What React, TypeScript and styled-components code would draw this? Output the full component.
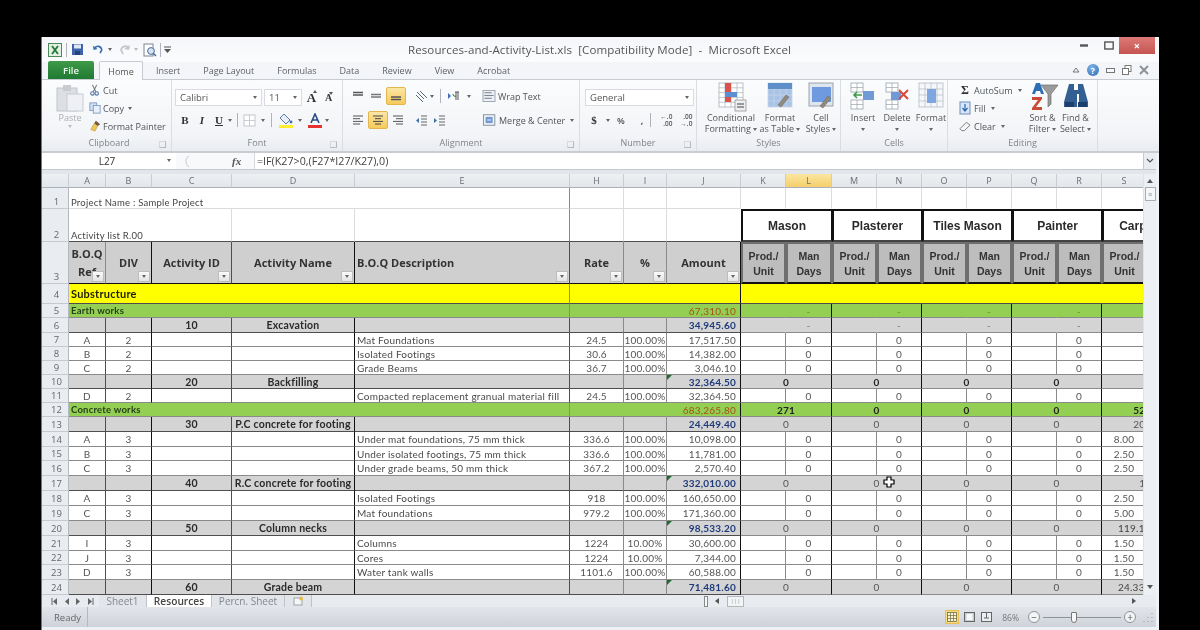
import React from "react";
import styled, { createGlobalStyle } from "styled-components";

const Global = createGlobalStyle`
  html, body { margin: 0; padding: 0; background: #000; height: 630px; overflow: hidden; }
  #root { height: 630px; }
  * { box-sizing: border-box; }
`;

const Page = styled.div`
  width: 1200px; height: 630px; background: #000; padding: 37px 41px 0;
`;
const Win = styled.div`
  width: 1118px; height: 593px; background: #eef1f5; display: flex; flex-direction: column;
  font-family: "Open Sans", "Noto Sans", sans-serif; color: #4a4a4a; filter: blur(0.35px);
  border-left: 1px solid #777; overflow: hidden;
`;
const Svg = styled.svg`display: block; flex-shrink: 0;`;

/* title bar */
const TitleBar = styled.div`
  height: 25px; display: flex; align-items: center; padding-left: 6px; position: relative;
  background: linear-gradient(#f4f6f9, #fbfcfd);
`;
const Quick = styled.div`display: flex; align-items: center; gap: 3px; width: 360px;`;
const Sep = styled.span<{ $h?: number; $m?: number }>`
  display: block; width: 1px; height: ${p => p.$h ?? 14}px; background: #b0b4ba; margin: 0 ${p => p.$m ?? 3}px; flex-shrink: 0;
`;
const Title = styled.div`
  font-size: 11.55px; color: #555; white-space: pre; width: 650px; letter-spacing: .08px;
`;
const WinBtns = styled.div`display: flex; align-items: flex-start; height: 100%; margin-left: auto; margin-right: 4px;`;
const WinBtn = styled.div<{ $w: number; $close?: boolean }>`
  width: ${p => p.$w}px; height: 17px; display: flex; align-items: center; justify-content: center;
  color: #fff; font-size: 11px; font-weight: 700;
  background: ${p => (p.$close ? "linear-gradient(#dd7a78,#c45450)" : "transparent")};
`;

/* tab row */
const TabRow = styled.div`
  height: 18px; display: flex; align-items: flex-end; padding-left: 6px; position: relative;
  border-bottom: 1px solid #c6cbd2; background: #f3f5f8;
`;
const FileTab = styled.div`
  width: 46px; height: 18px; background: linear-gradient(#3f9a48, #1f7a33); color: #eef8ee; font-size: 9.5px;
  font-weight: 600; display: flex; align-items: center; justify-content: center; border-radius: 2px 2px 0 0;
`;
const HomeTab = styled.div`
  margin-left: 5px; width: 44px; height: 19px; margin-bottom: -1px; background: #f9fafb; border: 1px solid #c6cbd2;
  border-bottom: none; font-size: 9px; display: flex; align-items: center; justify-content: center;
  border-radius: 2px 2px 0 0; color: #555;
`;
const TabList = styled.div`display: flex; gap: 23px; margin-left: 13px; height: 18px; align-items: center;`;
const TabLabel = styled.span`font-size: 9px; color: #5d6167;`;
const HelpIcons = styled.div`
  margin-left: auto; margin-right: 10px; display: flex; gap: 7px; align-items: center; height: 18px;
`;
const HelpDot = styled.span`
  width: 12px; height: 12px; border-radius: 50%; background: radial-gradient(circle at 40% 30%, #7fb4ea, #2a69b4);
  color: #fff; font-size: 9px; font-weight: 700; display: flex; align-items: center; justify-content: center;
`;

/* ribbon */
const Ribbon = styled.div`
  height: 73px; display: flex; background: linear-gradient(#fbfcfd, #f2f4f7 80%, #e9ecf0); padding-left: 5px;
  border-bottom: 2px solid #c9ccd1;
`;
const Group = styled.div<{ $w: number }>`
  width: ${p => p.$w}px; display: flex; flex-direction: column; border-right: 1px solid #dadde2; position: relative; flex-shrink: 0;
`;
const GroupBody = styled.div<{ $pl?: number }>`
  flex: 1; display: flex; padding-left: ${p => p.$pl ?? 0}px; padding-top: 1px; min-height: 0;
`;
const GroupLabel = styled.div`
  height: 14px; text-align: center; font-size: 9px; color: #808489; line-height: 12px;
`;
const Launcher = styled.span`
  position: absolute; right: 5px; bottom: 3px; width: 7px; height: 7px; border: 1px solid #b6bbc2; border-top-color: #d5d8dc; border-left-color: #d5d8dc;
`;
const Column = styled.div<{ $gap?: number; $w?: number; $pt?: number }>`
  display: flex; flex-direction: column; gap: ${p => p.$gap ?? 0}px; width: ${p => (p.$w ? p.$w + "px" : "auto")};
  padding-top: ${p => p.$pt ?? 0}px; flex-shrink: 0;
`;
const Line = styled.div<{ $gap?: number; $h?: number; $pl?: number }>`
  display: flex; align-items: center; gap: ${p => p.$gap ?? 2}px; height: ${p => p.$h ?? 18}px;
  padding-left: ${p => p.$pl ?? 0}px; font-size: 9px; color: #505458; white-space: nowrap;
`;
const Faded = styled.div`
  font-size: 9px; color: #a9adb2; text-align: center; margin-top: 1px; line-height: 10px;
`;
const PasteCaret = styled.div`display: flex; justify-content: center; margin-top: 2px; opacity: .4;`;
const Caret = styled.span`
  display: inline-block; width: 0; height: 0; border-left: 2.5px solid transparent; border-right: 2.5px solid transparent;
  border-top: 3px solid #666; flex-shrink: 0; vertical-align: middle;
`;
const SelectBox = styled.div<{ $w: number }>`
  width: ${p => p.$w}px; height: 17px; background: #fff; border: 1px solid #d8dbe0; display: flex; align-items: center;
  justify-content: space-between; padding: 0 4px; font-size: 9.5px; color: #555;
`;
const Toggle = styled.span<{ $on?: boolean }>`
  width: ${p => (p.$on ? 20 : 16)}px; height: 18px; display: flex; align-items: center; justify-content: center; flex-shrink: 0;
  background: ${p => (p.$on ? "linear-gradient(#fbe7a4,#f7c95c)" : "transparent")};
  border: ${p => (p.$on ? "1px solid #e2b64a" : "none")}; border-radius: 2px;
`;
const Glyph = styled.span<{ $i?: boolean; $u?: boolean; $w?: number }>`
  font-family: "Liberation Serif", serif; font-size: 11px; font-weight: 700; color: #333; width: ${p => p.$w ?? 16}px; text-align: center;
  font-style: ${p => (p.$i ? "italic" : "normal")}; text-decoration: ${p => (p.$u ? "underline" : "none")};
`;
const GrowMark = styled.span`
  display: inline-block; margin-left: -3px; vertical-align: top; font-size: 0; width: 0; height: 0;
  border-left: 2px solid transparent; border-right: 2px solid transparent; border-bottom: 3px solid #555;
`;
const ShrinkMark = styled(GrowMark)`border-bottom: none; border-top: 3px solid #555;`;
const BigBtn = styled.div<{ $w: number }>`
  width: ${p => p.$w}px; display: flex; flex-direction: column; align-items: center; flex-shrink: 0;
  font-size: 9px; line-height: 11px; color: #555; text-align: center; white-space: pre;
`;
const BigIcon = styled.div`height: 28px; margin-top: 2px; display: flex; align-items: center; justify-content: center; margin-bottom: 1px;`;

/* formula bar */
const FormulaBar = styled.div`
  height: 17px; display: flex; align-items: center; background: #fff; border-bottom: 1px solid #c6cad0; padding-left: 6px; margin-right: 3px;
  font-size: 9.5px; color: #444;
`;
const NameBox = styled.div`
  width: 128px; display: flex; justify-content: center; position: relative; font-size: 10px; color: #333; padding-right: 10px;
`;
const NameCaret = styled(Caret)`position: absolute; right: 5px; top: 5px;`;
const FxZone = styled.div`
  width: 79px; display: flex; align-items: center; background: #f8f9fb; height: 16px; padding-left: 6px; gap: 42px; border-right: 1px solid #d5d8dc;
`;
const Fx = styled.span`font-family: "Liberation Serif", serif; font-style: italic; font-weight: 700; font-size: 11px; color: #555;`;
const Formula = styled.span`flex: 1; padding-left: 2px; font-size: 10.7px;`;
const ExpandBox = styled.div`
  width: 13px; height: 16px; background: #e9ecf0; display: flex; align-items: center; justify-content: center; border-left: 1px solid #c6cad0;
`;
const Gap = styled.div`height: 4px; background: #e2e5e9; margin-right: 3px;`;

/* sheet */
const cols = "27px 37px 46px 80px 123px 215px 54px 43px 74px 45px 46px 45px 45px 45px 45px 45px 45px 45px 45px";
const SheetWrap = styled.div`display: flex; height: 421px; padding-right: 3px;`;
const GridClip = styled.div`flex: 1; overflow: hidden; min-width: 0; background: #fff;`;
const ScrollBar = styled.div`
  width: 13px; background: #eceff3; display: flex; flex-direction: column; align-items: center; justify-content: space-between; padding: 5px 0 6px;
  border-left: 1px solid #dfe2e6;
`;
const Thumb = styled.div`
  width: 11px; height: 14px; border: 1px solid #a8adb5; background: #f5f7f9; margin-top: 4px; display: flex; align-items: center; justify-content: center;
  font-size: 7px; color: #888; line-height: 1;
`;
const ScrollTop = styled.div`display: flex; flex-direction: column; align-items: center;`;
const ArrowUp = styled.span`
  width: 0; height: 0; border-left: 3.5px solid transparent; border-right: 3.5px solid transparent; border-bottom: 4px solid #555;
`;
const ArrowDown = styled.span`
  width: 0; height: 0; border-left: 3.5px solid transparent; border-right: 3.5px solid transparent; border-top: 4px solid #555;
`;
const Row = styled.div<{ $h: number }>`
  display: grid; grid-template-columns: ${cols}; height: ${p => p.$h}px; width: 1120px;
`;
const Head = styled.div<{ $sel?: boolean }>`
  background: ${p => (p.$sel ? "linear-gradient(#fbe6a0,#f4cf6c)" : "linear-gradient(#eef0f3,#e3e6ea)")};
  border-right: 1px solid #c9ccd2; border-bottom: 1px solid #aab0b7; font-size: 9px; color: #6a6e74; text-align: center; line-height: 13px;
`;
const RowNum = styled.div<{ $pb?: number }>`
  background: #e9ecf0; border-right: 1px solid #b4b8be; border-bottom: 1px solid #c6c9ce; font-size: 9.5px; color: #666;
  display: flex; align-items: flex-end; justify-content: center; line-height: 13px; padding-left: 3px; padding-bottom: ${p => p.$pb ?? 0}px;
`;
const bg: Record<string, string> = { white: "#fff", gray: "#d4d4d4", green: "#92cf52", yellow: "#ffff00", head: "#cfcfcf", trade: "#bcbcbc" };
const edge: Record<string, string> = { black: "1px solid #111", dark: "1px solid #4e4e4e", mid: "1px solid #8a8a8a", light: "1px solid #dcdcdc", none: "1px solid transparent" };
const Cell = styled.div<{ $bg?: string; $r?: string; $b?: string; $span?: number; $al?: string; $bold?: boolean; $color?: string; $size?: number; $pl?: number; $tri?: boolean; $rw?: number }>`
  position: relative; white-space: nowrap;
  grid-column: span ${p => p.$span ?? 1};
  background: ${p => bg[p.$bg ?? "white"]};
  border-right: ${p => edge[p.$r ?? "light"]}; border-bottom: ${p => edge[p.$b ?? "mid"]};
  display: flex; align-items: center; padding: 0 ${p => p.$rw ?? 2}px 0 ${p => p.$pl ?? 2}px;
  justify-content: ${p => (p.$al === "c" ? "center" : p.$al === "r" ? "flex-end" : "flex-start")};
  font-family: "Lato", "Open Sans", sans-serif; font-size: ${p => p.$size ?? 10}px; font-weight: ${p => (p.$bold ? 700 : 400)};
  color: ${p => p.$color ?? "#4a4a4a"}; letter-spacing: .22px;
  &::before {
    content: ""; display: ${p => (p.$tri ? "block" : "none")}; position: absolute; left: 0; top: 0;
    border-top: 5px solid #1f6b32; border-right: 5px solid transparent;
  }
`;
const Bottomed = styled.span<{ $pb: number }>`align-self: flex-end; padding-bottom: ${p => p.$pb}px; font-size: 9.5px; color: #444;`;
const HeaderText = styled.span`
  font-family: "Open Sans", sans-serif; font-size: 11px; font-weight: 700; color: #333; white-space: pre; text-align: center; line-height: 18px; letter-spacing: 0;
`;
const Filter = styled.span`
  position: absolute; right: 1px; bottom: 1px; width: 12px; height: 11px; background: linear-gradient(#fafafa,#e4e4e4); border: 1px solid #bdbdbd;
  display: flex; align-items: center; justify-content: center;
`;
const TradeName = styled.div`
  grid-column: span 2; background: #fff; border: 2px solid #111; border-bottom: 2px solid #444;
  display: flex; align-items: center; justify-content: center; font-family: "Liberation Sans", sans-serif; font-size: 12px; font-weight: 700;
  color: #2a2a2a; margin-right: -1px; white-space: nowrap;
`;
const TradeSub = styled.div`
  background: #bdbdbd; border: 2px solid #6f6f6f; border-bottom: 2px solid #111; display: flex; align-items: center; justify-content: center;
  font-family: "Liberation Sans", sans-serif; font-size: 10.5px; font-weight: 700; line-height: 15px; color: #333; text-align: center; white-space: pre; padding-top: 1px;
`;
const CursorMark = styled.svg`position: absolute; left: 51px; top: 0px; z-index: 2;`;

/* tabs strip */
const Strip = styled.div`
  height: 12px; display: flex; align-items: center; background: #e8ebef; font-size: 10px; color: #777; margin-right: 3px; position: relative;
`;
const NavArrows = styled.div`width: 57px; padding: 0 5px 0 9px; display: flex; justify-content: space-between; align-items: center; flex-shrink: 0;`;
const SheetTab = styled.div<{ $w: number; $on?: boolean }>`
  width: ${p => p.$w}px; height: 12px; display: flex; align-items: center; justify-content: center; flex-shrink: 0; margin-top: -1px; line-height: 12px; padding-top: 1px;
  background: ${p => (p.$on ? "#fff" : "#e2e5ea")}; color: ${p => (p.$on ? "#444" : "#85898f")}; font-weight: ${p => (p.$on ? 600 : 400)};
  border-right: 1px solid #bfc3c9; font-size: ${p => (p.$on ? 10.2 : 10)}px;
`;
const Splitter = styled.div`
  margin-left: 392px; width: 4px; height: 11px; border: 1px solid #888; background: #f7f7f7; flex-shrink: 0;
`;
const Tri = styled.span<{ $dir: "l" | "r" }>`
  width: 0; height: 0; margin-left: ${p => (p.$dir === "l" ? 7 : 388)}px; border-top: 3.5px solid transparent; border-bottom: 3.5px solid transparent;
  ${p => (p.$dir === "l" ? "border-right: 4px solid #555;" : "border-left: 4px solid #555;")}
`;
const HThumb = styled.div`
  margin-left: 8px; width: 17px; height: 11px; border: 1px solid #b2b7be; background: #f2f4f6; font-size: 6px; text-align: center; line-height: 9px; color: #999; flex-shrink: 0;
`;

/* status */
const Status = styled.div`
  height: 20px; display: flex; align-items: center; background: linear-gradient(#e2e5ea,#cfd3d9); font-size: 9.5px; color: #666; margin-right: 3px;
`;
const Ready = styled.div`width: 46px; padding-left: 12px; border-right: 1px solid #b6bac0; height: 100%; display: flex; align-items: center; flex-shrink: 0;`;
const StatusRight = styled.div`margin-left: auto; display: flex; align-items: center; gap: 3px; padding-right: 2px;`;
const ViewBtn = styled.span<{ $on?: boolean }>`
  width: 14px; height: 14px; display: flex; align-items: center; justify-content: center;
  background: ${p => (p.$on ? "#f8dc85" : "transparent")}; border: ${p => (p.$on ? "1px solid #e7c04f" : "none")};
`;
const Zoom = styled.span`margin: 0 6px 0 6px; font-size: 8.5px; color: #777;`;
const Circle = styled.span`
  width: 12px; height: 12px; border-radius: 50%; border: 1px solid #8d939a; background: #f3f5f7; display: flex; align-items: center; justify-content: center;
  font-size: 10px; line-height: 1; color: #555;
`;
const Slider = styled.div`width: 78px; height: 1px; background: #8d939a; position: relative;`;
const SliderThumb = styled.span`
  position: absolute; left: 28px; top: -5px; width: 6px; height: 11px; background: #f6f7f8; border: 1px solid #777; border-radius: 1px 1px 3px 3px;
`;
const DecimalIcon = styled.span`
  display: flex; flex-direction: column; width: 14px; font-size: 6.5px; line-height: 7px; color: #555; font-weight: 600; text-align: right; flex-shrink: 0;
`;

/* icons */
const Grid = ({ x, y, w, h, n = 3, m = 3, c = "#9aa3ad", fill = "#fff" }: any) => {
  const l: any[] = [];
  for (let i = 1; i < n; i++) l.push(<line key={"v" + i} x1={x + (w * i) / n} x2={x + (w * i) / n} y1={y} y2={y + h} stroke={c} strokeWidth=".7" />);
  for (let i = 1; i < m; i++) l.push(<line key={"h" + i} y1={y + (h * i) / m} y2={y + (h * i) / m} x1={x} x2={x + w} stroke={c} strokeWidth=".7" />);
  return <g><rect x={x} y={y} width={w} height={h} fill={fill} stroke={c} strokeWidth=".8" />{l}</g>;
};
const Brush = ({ x, y }: any) => <path d={`M${x} ${y + 12}l8-10 3 2-8 10z`} fill="#8f8a7a" stroke="#666" strokeWidth=".5" />;
const BigCond = () => (
  <Svg width="32" height="30" viewBox="0 0 32 30"><Grid x={4} y={1} w={24} h={24} n={4} m={5} c="#a9b1ba" />
    <rect x={10} y={1} width={6} height={10} fill="#d9534a" /><rect x={10} y={10} width={12} height={5} fill="#5b8fd4" /><rect x={10} y={15} width={6} height={5} fill="#d9534a" />
    <rect x={20} y={18} width={11} height={11} fill="#eee" stroke="#888" strokeWidth=".7" /><path d="M22 22h7M22 25h7" stroke="#444" strokeWidth="1" /></Svg>
);
const BigTable = () => (
  <Svg width="30" height="30" viewBox="0 0 30 30"><Grid x={3} y={1} w={24} h={24} n={4} m={4} c="#c7d5e8" fill="#a9c3e6" /><rect x={3} y={1} width={24} height={6} fill="#5f8fc9" /><Brush x={13} y={11} /></Svg>
);
const BigCell = () => (
  <Svg width="30" height="30" viewBox="0 0 30 30"><rect x={3} y={1} width={24} height={23} fill="#dfe6f0" stroke="#9aa3ad" /><rect x={6} y={5} width={19} height={15} fill="#6f9ae0" /><Brush x={14} y={12} /></Svg>
);
const BigInsert = () => (
  <Svg width="30" height="30" viewBox="0 0 30 30"><Grid x={3} y={1} w={12} h={9} n={2} m={2} /><Grid x={3} y={18} w={12} h={9} n={2} m={2} /><rect x={15} y={9} width={11} height={9} fill="#6f9ad6" /><path d="M14 13H6M9 10l-3 3 3 3" stroke="#3f9a48" strokeWidth="1.6" fill="none" /></Svg>
);
const BigDelete = () => (
  <Svg width="30" height="30" viewBox="0 0 30 30"><Grid x={4} y={1} w={12} h={9} n={2} m={2} /><Grid x={4} y={18} w={12} h={9} n={2} m={2} /><rect x={9} y={10} width={10} height={8} fill="#6f9ad6" /><path d="M17 8l9 9M26 8l-9 9" stroke="#d94a38" strokeWidth="2" /></Svg>
);
const BigFormat = () => (
  <Svg width="30" height="30" viewBox="0 0 30 30"><Grid x={3} y={1} w={24} h={24} n={4} m={4} c="#b5bcc5" fill="#f5f7fa" /><rect x={11} y={7} width={9} height={14} fill="#7ea6e0" /></Svg>
);
const BigSort = () => (
  <Svg width="32" height="30" viewBox="0 0 32 30"><path d="M9 1h4l4 11h-3l-1-3H9l-1 3H5z" fill="#2d6fb5" /><path d="M5 15h10v2l-6 8h6v3H5v-2l6-8H5z" fill="#c94a35" /><path d="M14 3h17l-7 9v10l-3 3V12z" fill="#9b9b9b" stroke="#6f6f6f" strokeWidth=".7" /></Svg>
);
const BigFind = () => (
  <Svg width="30" height="30" viewBox="0 0 30 30"><path d="M8 2h5v6h4V2h5l5 18v5h-9V12h-2v13H3v-5z" fill="#345f93" /><rect x={4} y={20} width={9} height={5} fill="#1c3f6c" /><rect x={17} y={20} width={9} height={5} fill="#1c3f6c" /></Svg>
);

const FilterBtn = () => <Filter><Caret /></Filter>;

const trades = ["Mason", "Plasterer", "Tiles Mason", "Painter", "Carpenter"];
const letters = ["A", "B", "C", "D", "E", "H", "I", "J", "K", "L", "M", "N", "O", "P", "Q", "R", "S", ""];
const BLUE = "#1e3a7a", ORG = "#a6501c";

type R = {
  n: number; h: number; k: "white" | "gray" | "green"; a?: string; b?: string; c?: string; d?: string; e?: string;
  rate?: string; pct?: string; amt?: string; tri?: boolean; t?: string; dash?: boolean; s?: string; sl?: boolean;
};
const data: R[] = [
  { n: 5, h: 14, k: "green", a: "Earth works", amt: "67,310.10", dash: true },
  { n: 6, h: 15, k: "gray", c: "10", d: "Excavation", amt: "34,945.60", dash: true },
  { n: 7, h: 14, k: "white", a: "A", b: "2", e: "Mat Foundations", rate: "24.5", pct: "100.00%", amt: "17,517.50", t: "0" },
  { n: 8, h: 14, k: "white", a: "B", b: "2", e: "Isolated Footings", rate: "30.6", pct: "100.00%", amt: "14,382.00", t: "0" },
  { n: 9, h: 14, k: "white", a: "C", b: "2", e: "Grade Beams", rate: "36.7", pct: "100.00%", amt: "3,046.10", t: "0" },
  { n: 10, h: 14, k: "gray", c: "20", d: "Backfilling", amt: "32,364.50", tri: true, t: "0" },
  { n: 11, h: 14, k: "white", a: "D", b: "2", e: "Compacted replacement granual material fill", rate: "24.5", pct: "100.00%", amt: "32,364.50", t: "0" },
  { n: 12, h: 14, k: "green", a: "Concrete works", amt: "683,265.80", t: "0", s: "52.50" },
  { n: 13, h: 15, k: "gray", c: "30", d: "P.C concrete for footing", amt: "24,449.40", t: "0", s: "20.40" },
  { n: 14, h: 15, k: "white", a: "A", b: "3", e: "Under mat foundations, 75 mm thick", rate: "336.6", pct: "100.00%", amt: "10,098.00", t: "0", s: "8.00" },
  { n: 15, h: 14, k: "white", a: "B", b: "3", e: "Under isolated footings, 75 mm thick", rate: "336.6", pct: "100.00%", amt: "11,781.00", t: "0", s: "2.50" },
  { n: 16, h: 15, k: "white", a: "C", b: "3", e: "Under grade beams, 50 mm thick", rate: "367.2", pct: "100.00%", amt: "2,570.40", t: "0", s: "2.50" },
  { n: 17, h: 15, k: "gray", c: "40", d: "R.C concrete for footing", amt: "332,010.00", tri: true, t: "0", s: "1.5" },
  { n: 18, h: 15, k: "white", a: "A", b: "3", e: "Isolated Footings", rate: "918", pct: "100.00%", amt: "160,650.00", t: "0", s: "2.50" },
  { n: 19, h: 15, k: "white", a: "C", b: "3", e: "Mat foundations", rate: "979.2", pct: "100.00%", amt: "171,360.00", t: "0", s: "5.00" },
  { n: 20, h: 15, k: "gray", c: "50", d: "Column necks", amt: "98,533.20", tri: true, t: "0", s: "119.16", sl: true },
  { n: 21, h: 15, k: "white", a: "I", b: "3", e: "Columns", rate: "1224", pct: "10.00%", amt: "30,600.00", t: "0", s: "1.50" },
  { n: 22, h: 14, k: "white", a: "J", b: "3", e: "Cores", rate: "1224", pct: "10.00%", amt: "7,344.00", t: "0", s: "1.50" },
  { n: 23, h: 15, k: "white", a: "D", b: "3", e: "Water tank walls", rate: "1101.6", pct: "100.00%", amt: "60,588.00", t: "0", s: "1.50" },
  { n: 24, h: 15, k: "gray", c: "60", d: "Grade beam", amt: "71,481.60", tri: true, t: "0", s: "24.33", sl: true },
];

const TradeCells = ({ r }: { r: R }) => {
  const green = r.k === "green";
  const out: React.ReactNode[] = [];
  for (let i = 0; i < 4; i++) {
    if (r.k === "white") {
      out.push(<Cell key={i + "k"} $r="mid" />);
      out.push(<Cell key={i + "l"} $r="black" $al="c" $color="#555">{r.t}</Cell>);
    } else if (r.dash) {
      out.push(<Cell key={i + "k"} $bg={r.k} $r="none" />);
      out.push(<Cell key={i + "l"} $bg={r.k} $r="black" $al="c" $color={green ? "#5d9a2e" : "#777"}>-</Cell>);
    } else {
      const val = r.n === 12 && i === 0 ? "271" : "0";
      const bold = r.n === 12 || r.n === 10;
      out.push(
        <Cell key={i} $bg={r.k} $span={2} $r="black" $al="c" $bold={bold} $color={bold ? "#222" : "#555"}>
          {val}
          {r.n === 17 && i === 1 && (
            <CursorMark width="12" height="13" viewBox="0 0 12 13">
              <path d="M4 1h4v3h3v4H8v3H4V8H1V4h3z" fill="#fff" stroke="#000" strokeWidth="1.2" />
            </CursorMark>
          )}
        </Cell>
      );
    }
  }
  if (r.k === "white") {
    out.push(<Cell key="s" $al="c" $r="mid" $color="#555">{r.s}</Cell>);
    out.push(<Cell key="t" />);
  } else if (r.sl) {
    out.push(<Cell key="s" $bg={r.k} $span={2} $pl={16} $color="#444">{r.s}</Cell>);
  } else {
    out.push(<Cell key="s" $bg={r.k} $span={2} $al="c" $bold={green} $color={green ? "#222" : "#555"}>{r.s}</Cell>);
  }
  return <>{out}</>;
};

const DataRow = ({ r }: { r: R }) => {
  const line = r.k === "white" ? "mid" : "dark";
  if (r.k === "green") {
    return (
      <Row $h={r.h}>
        <RowNum>{r.n}</RowNum>
        <Cell $bg="green" $span={5} $r="mid" $b="mid" $bold $size={9.5} $color="#25401a">{r.a}</Cell>
        <Cell $bg="green" $span={2} $r="none" />
        <Cell $bg="green" $r="black" $al="r" $color={ORG} $rw={4}>{r.amt}</Cell>
        <TradeCells r={r} />
      </Row>
    );
  }
  const gray = r.k === "gray";
  return (
    <Row $h={r.h}>
      <RowNum>{r.n}</RowNum>
      <Cell $bg={r.k} $r="dark" $al="c" $b={line} $color="#555">{r.a}</Cell>
      <Cell $bg={r.k} $r="black" $al="c" $b={line} $color="#555">{r.b}</Cell>
      <Cell $bg={r.k} $r="dark" $al="c" $b={line} $bold $size={10.5} $color="#2a2a2a">{r.c}</Cell>
      <Cell $bg={r.k} $r="black" $al="c" $b={line} $bold $size={10.5} $color="#2a2a2a">{r.d}</Cell>
      <Cell $bg={r.k} $r="dark" $b={line}>{r.e}</Cell>
      <Cell $bg={r.k} $r="mid" $al="c" $b={line} $color="#555">{r.rate}</Cell>
      <Cell $bg={r.k} $r="mid" $al="c" $b={line} $pl={0} $rw={0} $color="#555">{r.pct}</Cell>
      <Cell $bg={r.k} $r="black" $al="r" $b={line} $rw={4} $tri={r.tri} $bold={gray} $color={gray ? BLUE : "#555"}>{r.amt}</Cell>
      <TradeCells r={r} />
    </Row>
  );
};

const CellDown = ({ label }: { label: string }) => <>{label + "\n"}<Caret /></>;
const TextCaret = ({ label }: { label: string }) => <>{label + " "}<Caret /></>;

export default function App() {
  return (
    <Page>
      <Global />
      <Win>
        <TitleBar>
          <Quick>
            <Svg width="14" height="14" viewBox="0 0 14 14"><rect x=".5" y=".5" width="13" height="13" fill="#e3efe4" stroke="#4c8a55" /><path d="M4 3l6 8M10 3l-6 8" stroke="#1f7a33" strokeWidth="1.8" /></Svg>
            <Sep $m={1} />
            <Svg width="13" height="13" viewBox="0 0 13 13"><rect x="1" y="1" width="11" height="11" fill="#3f63a8" /><rect x="3" y="1.5" width="7" height="4" fill="#dfe7f5" /><rect x="4" y="8" width="5" height="4" fill="#23427e" /></Svg>
            <Svg width="13" height="13" viewBox="0 0 16 13" style={{ marginLeft: 5 }}><path d="M3 5c3-4 8-3 9 2l-2 4" fill="none" stroke="#3a6fb5" strokeWidth="2" /><path d="M1 2l1 5 5-1z" fill="#3a6fb5" /></Svg>
            <Caret />
            <Svg width="14" height="13" viewBox="0 0 14 13" style={{ marginLeft: 2 }}><path d="M12 5C9 2 5 3 4 7l2 4" fill="none" stroke="#c4c8ce" strokeWidth="1.8" /><path d="M13 2l-1 5-5-1z" fill="#c4c8ce" /></Svg>
            <Caret style={{ borderTopColor: "#bbb" }} />
            <Svg width="15" height="14" viewBox="0 0 15 14" style={{ marginLeft: 1 }}><rect x="2" y="1" width="9" height="12" fill="#fff" stroke="#7d8590" /><circle cx="9" cy="8" r="3.4" fill="#d5e3f3" stroke="#4a6c96" /><path d="M11 10l3 3" stroke="#4a6c96" strokeWidth="1.5" /></Svg>
            <Sep $m={0} />
            <Svg width="7" height="8" viewBox="0 0 7 8"><path d="M0 1h7" stroke="#555" /><path d="M0 3l3.5 4L7 3z" fill="#555" /></Svg>
          </Quick>
          <Title>{"Resources-and-Activity-List.xls  [Compatibility Mode]  -  Microsoft Excel"}</Title>
          <WinBtns>
            <WinBtn $w={30}><Svg width="8" height="3" viewBox="0 0 8 3"><rect width="8" height="2.4" fill="#555" y=".3" /></Svg></WinBtn>
            <WinBtn $w={20}><Svg width="10" height="9" viewBox="0 0 10 9"><rect x=".8" y="1" width="8.4" height="7" fill="none" stroke="#555" strokeWidth="1.4" /></Svg></WinBtn>
            <WinBtn $w={36} $close>×</WinBtn>
          </WinBtns>
        </TitleBar>

        <TabRow>
          <FileTab>File</FileTab>
          <HomeTab>Home</HomeTab>
          <TabList>
            {["Insert", "Page Layout", "Formulas", "Data", "Review", "View", "Acrobat"].map(t => <TabLabel key={t}>{t}</TabLabel>)}
          </TabList>
          <HelpIcons>
            <Svg width="8" height="6" viewBox="0 0 8 6"><path d="M1 5l3-4 3 4z" fill="none" stroke="#777" /></Svg>
            <HelpDot>?</HelpDot>
            <Svg width="9" height="5" viewBox="0 0 9 5"><rect x=".5" y=".5" width="8" height="4" fill="#f7f8f9" stroke="#777" /></Svg>
            <Svg width="10" height="10" viewBox="0 0 10 10"><rect x="3" y=".5" width="6" height="6" fill="#fff" stroke="#777" /><rect x=".5" y="3.5" width="6" height="6" fill="#fff" stroke="#777" /></Svg>
            <Svg width="10" height="10" viewBox="0 0 10 10"><path d="M1 1l8 8M9 1L1 9" stroke="#8a8f95" strokeWidth="1.8" /></Svg>
          </HelpIcons>
        </TabRow>

        <Ribbon>
          <Group $w={125}>
            <GroupBody $pl={4}>
              <Column $w={38}>
                <Svg width="30" height="28" viewBox="0 0 30 28" style={{ margin: "3px 0 0 4px" }}>
                  <rect x="2" y="4" width="20" height="23" fill="#dcdfe3" stroke="#c1c5ca" /><rect x="8" y="1" width="8" height="6" fill="#c8ccd1" /><rect x="12" y="10" width="16" height="17" fill="#eef0f3" stroke="#c8ccd1" />
                </Svg>
                <Faded>Paste</Faded>
                <PasteCaret><Caret /></PasteCaret>
              </Column>
              <Column>
                <Line>
                  <Svg width="12" height="12" viewBox="0 0 14 14"><path d="M4 1l4 8M9 1L5 9" stroke="#6e7680" strokeWidth="1.2" /><circle cx="4" cy="11" r="2" fill="none" stroke="#5476a6" strokeWidth="1.3" /><circle cx="9" cy="11" r="2" fill="none" stroke="#5476a6" strokeWidth="1.3" /></Svg>
                  Cut
                </Line>
                <Line>
                  <Svg width="12" height="12" viewBox="0 0 14 14"><rect x="1" y="1" width="8" height="9" fill="#cfe0f5" stroke="#7b98bf" /><rect x="5" y="4" width="8" height="9" fill="#e7f0fb" stroke="#7b98bf" /></Svg>
                  Copy&nbsp;<Caret />
                </Line>
                <Line>
                  <Svg width="12" height="12" viewBox="0 0 14 14"><path d="M8 1l5 4-3 2-4-3z" fill="#6f5a3c" /><path d="M6 4l4 3-3 6-5-2z" fill="#eec65a" stroke="#b58f2f" strokeWidth=".6" /></Svg>
                  Format Painter
                </Line>
              </Column>
            </GroupBody>
            <GroupLabel>Clipboard</GroupLabel>
            <Launcher />
          </Group>

          <Group $w={171}>
            <GroupBody $pl={3}>
              <Column $gap={5} $pt={8}>
                <Line $gap={2} $h={17}>
                  <SelectBox $w={87}>Calibri <Caret /></SelectBox>
                  <SelectBox $w={38}>11 <Caret /></SelectBox>
                  <Glyph style={{ fontSize: 13 }} $w={16}>A<GrowMark /></Glyph>
                  <Glyph style={{ fontSize: 10 }} $w={14}>A<ShrinkMark /></Glyph>
                </Line>
                <Line $gap={1} $h={18} $pl={2}>
                  <Glyph>B</Glyph><Glyph $i>I</Glyph><Glyph $u>U</Glyph><Caret />
                  <Sep $m={4} />
                  <Svg width="14" height="13" viewBox="0 0 14 13"><Grid x={1} y={1} w={11} h={11} n={2} m={2} c="#b6bbc2" /></Svg>
                  <Caret style={{ marginLeft: 3 }} />
                  <Sep $m={5} />
                  <Svg width="16" height="15" viewBox="0 0 16 15"><path d="M6 1l6 6-4 4-6-6z" fill="#e7eef7" stroke="#5c7ba5" /><circle cx="13" cy="9" r="1.4" fill="#3a6fb5" /><rect x="1" y="12" width="14" height="3" fill="#ffee30" /></Svg>
                  <Caret style={{ marginLeft: 3 }} />
                  <Svg width="14" height="15" viewBox="0 0 14 15" style={{ marginLeft: 5 }}><path d="M3 10L7 1l4 9M4.5 7h5" fill="none" stroke="#294c86" strokeWidth="1.6" /><rect x="0" y="12" width="14" height="3" fill="#e3342f" /></Svg>
                  <Caret style={{ marginLeft: 2 }} />
                </Line>
              </Column>
            </GroupBody>
            <GroupLabel>Font</GroupLabel>
            <Launcher />
          </Group>

          <Group $w={237}>
            <GroupBody $pl={7}>
              <Column $gap={6} $pt={6}>
                <Line $gap={2} $h={18}>
                  <Toggle><Svg width="12" height="10" viewBox="0 0 12 10"><path d="M1 1.5h10M1 4h10" stroke="#555" strokeWidth="1.5" /></Svg></Toggle>
                  <Toggle><Svg width="12" height="10" viewBox="0 0 12 10"><path d="M1 3.5h10M1 6h10" stroke="#777" strokeWidth="1.5" /></Svg></Toggle>
                  <Toggle $on><Svg width="12" height="10" viewBox="0 0 12 10"><path d="M1 6h10M1 8.5h10" stroke="#555" strokeWidth="1.5" /></Svg></Toggle>
                  <Sep $m={2} $h={0} />
                  <Svg width="13" height="12" viewBox="0 0 13 12"><path d="M2 2l7 7M5 1l7 7M1 5l7 7" stroke="#5a6878" strokeWidth="1" /></Svg>
                  <Caret />
                  <Sep $m={4} />
                  <Svg width="13" height="10" viewBox="0 0 13 10"><path d="M1 2l3 3-3 3z" fill="#3f6fb2" /><path d="M8 1h4M9 1v8M11 1v8M6 3a2 2 0 0 0 3 2" stroke="#555" fill="none" /></Svg>
                  <Caret style={{ marginLeft: 5 }} />
                  <Sep $m={3} $h={0} />
                  <Svg width="14" height="12" viewBox="0 0 14 13"><rect x=".5" y=".5" width="13" height="12" fill="#eef1f5" stroke="#9aa3ad" /><path d="M2 3h8M2 6h10M2 9h8" stroke="#697683" /></Svg>
                  Wrap Text
                </Line>
                <Line $gap={2} $h={18}>
                  <Toggle><Svg width="12" height="10" viewBox="0 0 12 10"><path d="M1 1h10M1 3.7h7M1 6.4h10M1 9h7" stroke="#555" /></Svg></Toggle>
                  <Toggle $on><Svg width="12" height="10" viewBox="0 0 12 10"><path d="M1 1h10M3 3.7h6M1 6.4h10M3 9h6" stroke="#444" /></Svg></Toggle>
                  <Toggle><Svg width="12" height="10" viewBox="0 0 12 10"><path d="M1 1h10M4 3.7h7M1 6.4h10M4 9h7" stroke="#555" /></Svg></Toggle>
                  <Sep $m={2} $h={0} />
                  <Svg width="13" height="11" viewBox="0 0 13 11"><path d="M6 1h6M6 4h6M6 7h6M6 10h6" stroke="#666" /><path d="M4 3L1 5.5 4 8z" fill="#3f6fb2" /></Svg>
                  <Svg width="13" height="11" viewBox="0 0 13 11" style={{ marginLeft: 3 }}><path d="M6 1h6M6 4h6M6 7h6M6 10h6" stroke="#666" /><path d="M1 3l3 2.5L1 8z" fill="#3f6fb2" /></Svg>
                  <Sep $m={9} $h={0} />
                  <Svg width="14" height="12" viewBox="0 0 16 13" style={{ marginLeft: 14 }}><rect x=".5" y=".5" width="13" height="12" fill="#eef1f5" stroke="#7c8894" /><rect x="3" y="3" width="8" height="7" fill="#6f9ad6" /><path d="M5 6.5h4" stroke="#fff" /></Svg>
                  Merge &amp; Center&nbsp;<Caret />
                </Line>
              </Column>
            </GroupBody>
            <GroupLabel>Alignment</GroupLabel>
            <Launcher />
          </Group>

          <Group $w={117}>
            <GroupBody $pl={5}>
              <Column $gap={5} $pt={8}>
                <Line $h={17}><SelectBox $w={109}>General <Caret /></SelectBox></Line>
                <Line $gap={4} $h={18} $pl={1}>
                  <Glyph>$</Glyph><Caret />
                  <span style={{ marginLeft: 3, fontWeight: 600 }}>%</span>
                  <span style={{ marginLeft: 12, fontWeight: 700 }}>,</span>
                  <Sep $m={3} />
                  <DecimalIcon><span>←.0</span><span>.00</span></DecimalIcon>
                  <DecimalIcon style={{ marginLeft: 2 }}><span>.00</span><span>→.0</span></DecimalIcon>
                </Line>
              </Column>
            </GroupBody>
            <GroupLabel>Number</GroupLabel>
            <Launcher />
          </Group>

          <Group $w={144}>
            <GroupBody $pl={8}>
              <BigBtn $w={52}><BigIcon><BigCond /></BigIcon>{"Conditional\n"}<span><TextCaret label="Formatting" /></span></BigBtn>
              <BigBtn $w={46}><BigIcon><BigTable /></BigIcon>{"Format\n"}<span><TextCaret label="as Table" /></span></BigBtn>
              <BigBtn $w={36}><BigIcon><BigCell /></BigIcon>{"Cell\n"}<span><TextCaret label="Styles" /></span></BigBtn>
            </GroupBody>
            <GroupLabel>Styles</GroupLabel>
          </Group>

          <Group $w={107}>
            <GroupBody $pl={5}>
              <BigBtn $w={34}><BigIcon><BigInsert /></BigIcon><span><CellDown label="Insert" /></span></BigBtn>
              <BigBtn $w={34}><BigIcon><BigDelete /></BigIcon><span><CellDown label="Delete" /></span></BigBtn>
              <BigBtn $w={34}><BigIcon><BigFormat /></BigIcon><span><CellDown label="Format" /></span></BigBtn>
            </GroupBody>
            <GroupLabel>Cells</GroupLabel>
          </Group>

          <Group $w={150}>
            <GroupBody $pl={11}>
              <Column $w={67}>
                <Line $gap={3}>
                  <Glyph style={{ fontSize: 12 }} $w={12}>Σ</Glyph> AutoSum&nbsp;<Caret />
                </Line>
                <Line $gap={3}>
                  <Svg width="12" height="14" viewBox="0 0 12 14"><rect x="1" y="1" width="10" height="12" fill="#d9e6f6" stroke="#6d8fbd" /><path d="M6 3v6M3.5 7L6 10l2.5-3" stroke="#2f68b2" strokeWidth="1.2" fill="none" /></Svg>
                  Fill&nbsp;<Caret />
                </Line>
                <Line $gap={3}>
                  <Svg width="12" height="12" viewBox="0 0 13 12"><path d="M1 9l7-7 4 3-6 6H3z" fill="#f5f5f5" stroke="#777" /></Svg>
                  Clear&nbsp;<Caret />
                </Line>
              </Column>
              <BigBtn $w={33}><BigIcon><BigSort /></BigIcon>{"Sort &\n"}<span><TextCaret label="Filter" /></span></BigBtn>
              <BigBtn $w={33}><BigIcon><BigFind /></BigIcon>{"Find &\n"}<span><TextCaret label="Select" /></span></BigBtn>
            </GroupBody>
            <GroupLabel>Editing</GroupLabel>
          </Group>
        </Ribbon>

        <FormulaBar>
          <NameBox>L27<NameCaret /></NameBox>
          <FxZone>
            <Svg width="8" height="13" viewBox="0 0 8 13"><path d="M7 1C3 3 3 10 7 12" fill="none" stroke="#c6cad0" /></Svg>
            <Fx>fx</Fx>
          </FxZone>
          <Formula>=IF(K27&gt;0,(F27*I27/K27),0)</Formula>
          <ExpandBox><Svg width="8" height="6" viewBox="0 0 8 6"><path d="M1 1l3 3 3-3" fill="none" stroke="#555" strokeWidth="1.2" /></Svg></ExpandBox>
        </FormulaBar>
        <Gap />

        <SheetWrap>
          <GridClip>
            <Row $h={14}>
              <Head />
              {letters.map((l, i) => <Head key={i} $sel={l === "L"}>{l}</Head>)}
            </Row>

            <Row $h={21}>
              <RowNum>1</RowNum>
              <Cell $span={5} $r="mid" $b="light"><Bottomed $pb={0}>Project Name : Sample Project</Bottomed></Cell>
              <Cell $b="light" /><Cell $b="light" /><Cell $b="light" />
              {Array.from({ length: 10 }, (_, i) => <Cell key={i} $b="none" />)}
            </Row>

            <Row $h={33}>
              <RowNum>2</RowNum>
              <Cell $span={3} $b="dark"><Bottomed $pb={0}>Activity list R.00</Bottomed></Cell>
              <Cell $b="dark" /><Cell $r="mid" $b="dark" />
              <Cell $b="dark" /><Cell $b="dark" /><Cell $b="dark" $r="none" />
              {trades.map(t => <TradeName key={t}>{t}</TradeName>)}
            </Row>

            <Row $h={42}>
              <RowNum>3</RowNum>
              <Cell $bg="head" $r="mid" $b="black" $al="c"><HeaderText>{"B.O.Q\nRef"}</HeaderText><FilterBtn /></Cell>
              <Cell $bg="head" $r="black" $b="black" $al="c"><HeaderText>DIV</HeaderText><FilterBtn /></Cell>
              <Cell $bg="head" $r="dark" $b="black" $al="c"><HeaderText>Activity ID</HeaderText><FilterBtn /></Cell>
              <Cell $bg="head" $r="black" $b="black" $al="c"><HeaderText>Activity Name</HeaderText><FilterBtn /></Cell>
              <Cell $bg="head" $r="dark" $b="black"><HeaderText>B.O.Q Description</HeaderText><FilterBtn /></Cell>
              <Cell $bg="head" $r="mid" $b="black" $al="c"><HeaderText>Rate</HeaderText><FilterBtn /></Cell>
              <Cell $bg="head" $r="mid" $b="black" $al="c"><HeaderText>%</HeaderText><FilterBtn /></Cell>
              <Cell $bg="head" $r="black" $b="black" $al="c"><HeaderText>Amount</HeaderText><FilterBtn /></Cell>
              {Array.from({ length: 4 }, (_, i) => [
                <TradeSub key={i + "p"}>{"Prod./\nUnit"}</TradeSub>,
                <TradeSub key={i + "m"}>{"Man\nDays"}</TradeSub>,
              ])}
              <TradeSub>{"Prod./\nUnit"}</TradeSub>
              <TradeSub />
            </Row>

            <Row $h={20}>
              <RowNum $pb={2}>4</RowNum>
              <Cell $bg="yellow" $span={5} $r="mid" $b="dark" $bold $size={11} $color="#1d1d00">Substructure</Cell>
              <Cell $bg="yellow" $span={3} $r="black" $b="dark" />
              <Cell $bg="yellow" $span={10} $r="none" $b="dark" />
            </Row>

            {data.map(r => <DataRow key={r.n} r={r} />)}
          </GridClip>
          <ScrollBar>
            <ScrollTop><ArrowUp /><Thumb>≡</Thumb></ScrollTop>
            <ArrowDown />
          </ScrollBar>
        </SheetWrap>

        <Strip>
          <NavArrows>
            <Svg width="7" height="7" viewBox="0 0 7 7"><path d="M1 0v7" stroke="#666" /><path d="M6 0v7L2 3.5z" fill="#666" /></Svg>
            <Svg width="5" height="7" viewBox="0 0 5 7"><path d="M5 0v7L1 3.5z" fill="#666" /></Svg>
            <Svg width="5" height="7" viewBox="0 0 5 7"><path d="M0 0v7l4-3.5z" fill="#666" /></Svg>
            <Svg width="7" height="7" viewBox="0 0 7 7"><path d="M6 0v7" stroke="#666" /><path d="M1 0v7l4-3.5z" fill="#666" /></Svg>
          </NavArrows>
          <SheetTab $w={48}>Sheet1</SheetTab>
          <SheetTab $w={65} $on>Resources</SheetTab>
          <SheetTab $w={73}>Percn. Sheet</SheetTab>
          <SheetTab $w={27}><Svg width="11" height="10" viewBox="0 0 11 10"><rect x="1" y="2" width="8" height="7" fill="#f5f6f7" stroke="#a0a5ab" /><circle cx="8" cy="2.5" r="2" fill="#e9b949" /></Svg></SheetTab>
          <Splitter />
          <Tri $dir="l" />
          <HThumb>|||</HThumb>
          <Tri $dir="r" />
        </Strip>

        <Status>
          <Ready>Ready</Ready>
          <StatusRight>
            <ViewBtn $on><Svg width="10" height="10" viewBox="0 0 10 10"><Grid x={.5} y={.5} w={9} h={9} n={3} m={3} c="#6c6c50" fill="#fdf3c8" /></Svg></ViewBtn>
            <ViewBtn><Svg width="11" height="10" viewBox="0 0 11 10"><rect x=".5" y=".5" width="10" height="9" fill="#c9ced5" stroke="#666" /><rect x="2.5" y="2" width="6" height="6" fill="#f7f8f9" /></Svg></ViewBtn>
            <ViewBtn><Svg width="11" height="10" viewBox="0 0 11 10"><rect x=".5" y=".5" width="10" height="9" fill="#eceef1" stroke="#666" /><path d="M5.5 0v6M3 6h5" stroke="#666" /></Svg></ViewBtn>
            <Zoom>86%</Zoom>
            <Circle>−</Circle>
            <Slider><SliderThumb /></Slider>
            <Circle>+</Circle>
            <Svg width="12" height="12" viewBox="0 0 12 12" style={{ marginLeft: 3 }}><path d="M10 2v1M10 6v1M6 6v1M10 10v1M6 10v1M2 10v1" stroke="#a2a7ae" strokeWidth="1.2" /></Svg>
          </StatusRight>
        </Status>
      </Win>
    </Page>
  );
}
